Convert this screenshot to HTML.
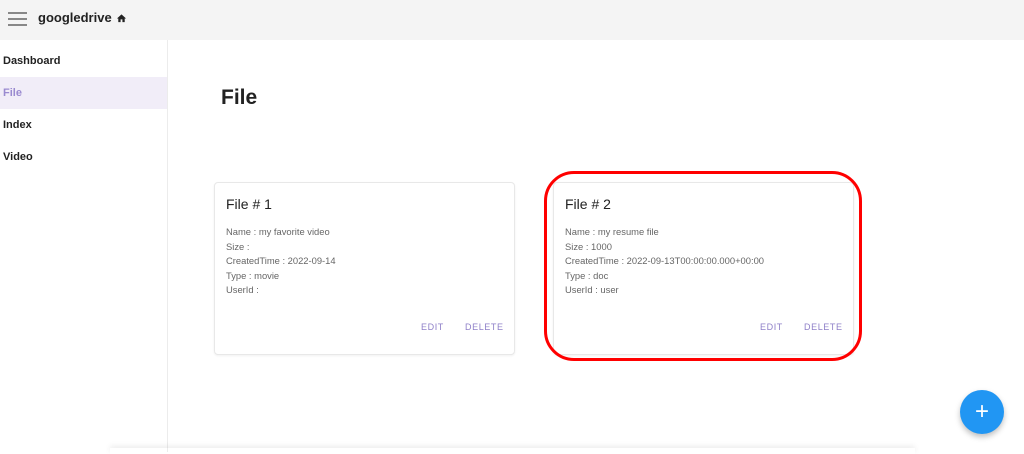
<!DOCTYPE html><html><head><style>
*{margin:0;padding:0;box-sizing:border-box}
body{width:1024px;height:452px;overflow:hidden;background:#fff;font-family:"Liberation Sans",sans-serif;position:relative}
.hdr{position:absolute;left:0;top:0;width:1024px;height:40px;background:#f4f4f4}
.side{position:absolute;left:0;top:40px;width:168px;height:412px;border-right:1px solid #ececec}
.nav{height:32px;line-height:32px;font-size:11px;font-weight:bold;color:#222;padding-left:3px}
.card{position:absolute;width:301px;height:173px;border:1px solid #e8e8e8;border-radius:4px;box-shadow:0 1px 2px rgba(0,0,0,.06);background:#fff}
.card h3{position:absolute;left:11px;top:13px;font-size:14px;font-weight:normal;color:#222}
.card .b{position:absolute;left:11px;top:42px;font-size:9.4px;color:#666;line-height:14.6px}
.card .a{position:absolute;top:139px;font-size:9px;color:#8f80c8;letter-spacing:.6px}
</style></head><body>
<div class="hdr">
<div style="position:absolute;left:8px;top:12px;width:19px;height:2px;background:#888;box-shadow:0 6px 0 #888,0 12px 0 #888"></div>
<div style="position:absolute;left:38px;top:10px;font-size:13px;font-weight:bold;color:#222">googledrive</div>
<svg style="position:absolute;left:116px;top:13px" width="11" height="11" viewBox="0 0 24 24"><path d="M10 20v-6h4v6h5v-8h3L12 3 2 12h3v8z" fill="#222"/></svg>
</div>
<div class="side">
<div class="nav" style="margin-top:5px">Dashboard</div>
<div class="nav" style="background:#f1edf8;color:#9a8ad0">File</div>
<div class="nav">Index</div>
<div class="nav">Video</div>
</div>
<div style="position:absolute;left:221px;top:86px;font-size:21px;font-weight:bold;color:#222">File</div>
<div class="card" style="left:214px;top:182px"><h3>File # 1</h3><div class="b">Name : my favorite video<br>Size :<br>CreatedTime : 2022-09-14<br>Type : movie<br>UserId :</div><span class="a" style="left:206px">EDIT</span><span class="a" style="left:250px">DELETE</span></div>
<div class="card" style="left:553px;top:182px"><h3>File # 2</h3><div class="b">Name : my resume file<br>Size : 1000<br>CreatedTime : 2022-09-13T00:00:00.000+00:00<br>Type : doc<br>UserId : user</div><span class="a" style="left:206px">EDIT</span><span class="a" style="left:250px">DELETE</span></div>
<div style="position:absolute;left:544px;top:171px;width:318px;height:190px;border:3px solid #f00;border-radius:30px"></div>
<div style="position:absolute;left:960px;top:390px;width:44px;height:44px;border-radius:50%;background:#2196f3;box-shadow:0 3px 6px rgba(0,0,0,.25);color:#fff;font-size:24px;text-align:center;line-height:43px">+</div>
<div style="position:absolute;left:110px;top:448px;width:805px;height:6px;box-shadow:0 -2px 6px rgba(0,0,0,.08)"></div>
</body></html>
